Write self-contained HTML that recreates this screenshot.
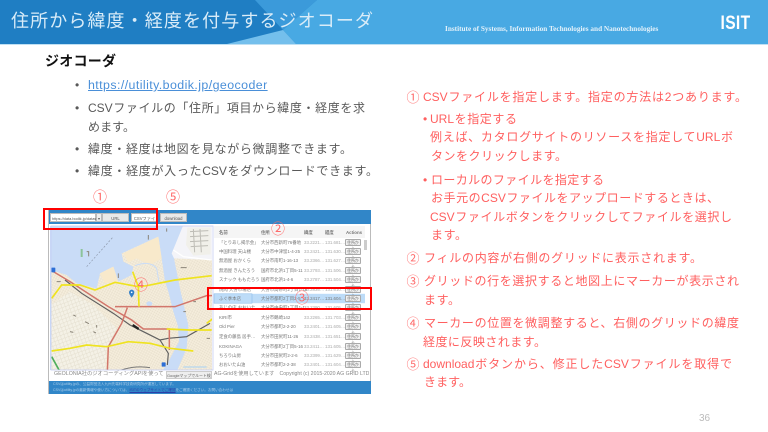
<!DOCTYPE html>
<html lang="ja"><head><meta charset="utf-8"><title>ジオコーダ</title>
<style>
html,body{margin:0;padding:0;background:#fff}
body{width:768px;height:432px;position:relative;overflow:hidden;font-family:"Liberation Sans","Noto Sans CJK JP",sans-serif}
#w{position:absolute;left:0;top:0;width:768px;height:432px;filter:blur(.35px)}
#s{position:absolute;left:0;top:0;width:768px;height:432px;filter:blur(.25px)}
.l{position:absolute;white-space:nowrap;text-align:justify;text-align-last:justify;text-justify:inter-character;line-height:18px;height:18px;font-size:12px}
.r{color:#ff5f5f}
.k{color:#595959}
.n{position:absolute;color:#ff6a6a;font-size:14px;line-height:18px;width:18px;text-align:center;font-family:"Noto Sans CJK JP",sans-serif}
.rb{position:absolute;border:2.5px solid #f00;box-sizing:border-box}
.g{position:absolute;font-size:4.4px;line-height:9px;height:9px;white-space:nowrap;color:#777;overflow:hidden}
.btn{position:absolute;left:345px;width:16px;height:7px;background:#f0f0f0;border:.5px solid #aaa;box-sizing:border-box;border-radius:1px;font-size:3.8px;line-height:6px;text-align:center;color:#666}
.tb{position:absolute;top:213px;height:9px;background:#e9e9e9;font-size:4.2px;line-height:9px;text-align:center;color:#555;border:.5px solid #bbb;box-sizing:border-box}
</style></head><body><div id="w">
<svg style="position:absolute;left:0;top:0" width="768" height="45" viewBox="0 0 768 45">
<rect width="768" height="44" fill="#1f7ec3"/>
<polygon points="255,0 317,0 283,30" fill="#3b9ada"/>
<polygon points="317,0 768,0 768,44 296,44 283,30" fill="#48a9e3"/>
<polygon points="283,30 296,44 227,44" fill="#74bfec"/>
<rect y="44" width="768" height="1" fill="#bfe0f3"/>
</svg>
<div class="l" style="left:11px;top:9px;width:362px;height:24px;line-height:24px;font-size:18px;color:#d9ecf8">住所から緯度・経度を付与するジオコーダ</div>
<div class="l" style="left:445px;top:20px;width:215px;font-family:'Liberation Serif',serif;font-size:7.250px;color:#e3f1fa;text-align-last:left;font-weight:bold">Institute of Systems, Information Technologies and Nanotechnologies</div>
<div style="position:absolute;left:715px;top:12px;width:41px;text-align:center;font-size:19px;line-height:24px;font-weight:bold;color:#fff;letter-spacing:.4px;transform:scaleX(.82)">ISIT</div>

<div class="l" style="left:45px;top:52px;width:71px;font-size:14px;font-weight:bold;color:#111">ジオコーダ</div>
<div class="l k" style="left:75px;top:76px;width:6px;text-align-last:left">•</div>
<div class="l" style="left:88px;top:76px;width:187px;font-size:12.400px;color:#4a8fd8;text-decoration:underline;text-align-last:left;letter-spacing:.42px">https://utility.bodik.jp/geocoder</div>
<div class="l k" style="left:75px;top:99px;width:6px;text-align-last:left">•</div>
<div class="l k" style="left:88px;top:99px;width:277px">CSVファイルの「住所」項目から緯度・経度を求</div>
<div class="l k" style="left:88px;top:118px;width:47px">めます。</div>
<div class="l k" style="left:75px;top:140px;width:6px;text-align-last:left">•</div>
<div class="l k" style="left:88px;top:140px;width:264px">緯度・経度は地図を見ながら微調整できます。</div>
<div class="l k" style="left:75px;top:162px;width:6px;text-align-last:left">•</div>
<div class="l k" style="left:88px;top:162px;width:290px">緯度・経度が入ったCSVをダウンロードできます。</div>

<div id="s">
<div style="position:absolute;left:48px;top:210px;width:323px;height:184px;background:#fff;border:1px solid #bbb;box-sizing:border-box"></div>
<div style="position:absolute;left:49px;top:210px;width:322px;height:14px;background:#3186c8"></div>
<div style="position:absolute;left:49px;top:381px;width:322px;height:13px;background:#3186c8"></div>
<div class="tb" style="left:50px;width:46px;background:#fff;text-align:left;padding-left:1px;font-size:3.900px">https://data.bodik.jp/dataset</div>
<div class="tb" style="left:96px;width:6px;background:#eee">▾</div>
<div class="tb" style="left:102px;width:27px">URL</div>
<div class="tb" style="left:131px;width:27px;background:#fff">CSVファイル</div>
<div class="tb" style="left:160px;width:27px">download</div>
<svg style="position:absolute;left:0;top:0" width="768" height="432" viewBox="0 0 768 432">
<defs>
<pattern id="st" width="7" height="7" patternUnits="userSpaceOnUse" patternTransform="rotate(28)">
<rect width="7" height="7" fill="#f5eddc"/>
<path d="M0,0H7M0,0V7" stroke="#d9d0ba" stroke-width="1.200"/>
</pattern>
<pattern id="st2" width="11" height="11" patternUnits="userSpaceOnUse" patternTransform="rotate(-20)">
<rect width="11" height="11" fill="#f4f1e6"/>
<path d="M0,3q5,3 11,0M3,0q3,5 0,11" stroke="#dfd9c8" stroke-width="1.200" fill="none"/>
</pattern>
<clipPath id="m"><rect x="0" y="3" width="486" height="432"/></clipPath>
</defs>
<g transform="translate(50,225) scale(.33333)" clip-path="url(#m)">
<rect x="0" y="0" width="490" height="440" fill="#c9dcf7"/>
<polygon points="3,135 50,150 80,175 140,190 150,145 190,125 205,170 245,150 250,125 220,110 215,85 325,35 335,100 345,170 355,200 370,260 383,300 387,350 350,420 335,440 3,440" fill="url(#st)"/>
<polygon points="3,240 60,200 130,240 200,310 170,370 165,440 3,440" fill="url(#st2)"/>
<polygon points="220,85 325,35 335,100 300,120 260,100 235,112" fill="#f8e9cb"/>
<polygon points="150,145 190,125 205,170 165,175" fill="#f8e9cb"/>
<polygon points="372,100 392,200 415,300 410,370 380,440 490,440 490,100" fill="url(#st)"/>
<polygon points="365,85 400,0 490,0 490,105 372,100" fill="#f4f4f8"/>
<polygon points="412,8 482,8 482,88 430,92 408,60" fill="#f1f0ea"/>
<path d="M420,20l55,-3M420,35l55,-3M420,50l55,-3M422,65l52,-3M430,12l4,70M450,12l4,70" stroke="#bdbcb5" stroke-width="3" fill="none"/>
<path d="M370,75L400,95L485,105" stroke="#fff" stroke-width="4" fill="none"/>
<path d="M255,122Q300,105 320,130L328,178" stroke="#c9dcf7" stroke-width="3" fill="none"/>
<ellipse cx="298" cy="236" rx="9" ry="7" fill="#c9dcf7"/>
<path d="M110,125L190,35" stroke="#8d98ab" stroke-width="2" stroke-dasharray="6 5" fill="none"/>
<rect x="92" y="72" width="6" height="24" fill="#8bc39a"/>
<path d="M70,270l8,4M105,290l12,6M60,320l10,2M130,320l8,4M20,170h12M205,145v14M295,30v14M392,128h18M400,260h8M430,230h8M470,340h10M110,80h6v14M140,300v8M350,10v10" stroke="#8a8478" stroke-width="3" fill="none"/>
<path d="M45,165L95,205L190,265L240,300L290,325L330,345L355,340L410,335L480,295M330,345L355,385L352,420" stroke="#5f5f5f" stroke-width="3.500" fill="none"/>
<path d="M248,300L266,312" stroke="#222" stroke-width="7"/>
<path d="M200,440Q250,420 300,428" stroke="#777" stroke-width="3" fill="none"/>
<path d="M10,140L60,170L175,245L245,285L280,312H358V375M195,245H375L470,212H490M232,248L215,295L175,365L172,440" stroke="#d2766b" stroke-width="4.500" fill="none"/>
<path d="M5,220L35,180H90L135,195L195,172L265,185L290,182L375,165L485,152M248,140L265,185L267,245M5,378L60,370L110,360L170,365L235,350L300,355L360,370L430,378M350,312L420,315L485,315M470,295L490,280" stroke="#efe31f" stroke-width="5" fill="none"/>
<path d="M5,395L30,440" stroke="#4fae5c" stroke-width="5" fill="none"/>
<rect x="4" y="128" width="12" height="14" rx="2" fill="#2d6fd6"/>
<rect x="335" y="412" width="12" height="13" rx="2" fill="#2d6fd6"/>
<path d="M245,194a8,8 0 0 1 8,8c0,6 -8,16 -8,16s-8,-10 -8,-16a8,8 0 0 1 8,-8z" fill="#3580c8"/>
<circle cx="245" cy="202" r="2.500" fill="#fff"/>
<rect x="400" y="424" width="70" height="4" fill="#b9d7ee"/>
</g>
<rect x="51" y="226" width="162" height="144" fill="none" stroke="#c5cdf3" stroke-width=".8"/>
<rect x="214" y="226" width="151" height="12" fill="#f5f5f5"/>
<rect x="214" y="293.800" width="151" height="9.400" fill="#bddcf8"/>
<rect x="214" y="293.800" width="38" height="9.400" fill="none" stroke="#7fb5e8" stroke-width=".5"/>
<rect x="364" y="240" width="3" height="10" fill="#ccc"/>
</svg>
<div class="g" style="left:219px;top:228px;font-weight:bold">名前</div><div class="g" style="left:261px;top:228px;font-weight:bold">住所</div><div class="g" style="left:304px;top:228px;font-weight:bold">緯度</div><div class="g" style="left:325px;top:228px;font-weight:bold">経度</div><div class="g" style="left:346px;top:228px;font-weight:bold">Actions</div>

<div class="g" style="left:219px;top:237.500px;width:38px">「とりあし掲示会」と…</div><div class="g" style="left:261px;top:237.500px">大分市西新町76番地</div><div class="g" style="left:304px;top:237.500px;color:#aaa">33.2221…</div><div class="g" style="left:325px;top:237.500px;color:#aaa">131.681…</div><div class="btn" style="top:238.500px">住所から</div>
<div class="g" style="left:219px;top:247px">中国料理 天山楼</div><div class="g" style="left:261px;top:247px">大分市中津留1-4-25</div><div class="g" style="left:304px;top:247px;color:#aaa">33.2421…</div><div class="g" style="left:325px;top:247px;color:#aaa">131.630…</div><div class="btn" style="top:248px">住所から</div>
<div class="g" style="left:219px;top:256.300px">無酒屋 おかくら</div><div class="g" style="left:261px;top:256.300px">大分市南町1-16-13</div><div class="g" style="left:304px;top:256.300px;color:#aaa">33.2366…</div><div class="g" style="left:325px;top:256.300px;color:#aaa">131.627…</div><div class="btn" style="top:257.300px">住所から</div>
<div class="g" style="left:219px;top:265.700px">無酒屋 きんたろう</div><div class="g" style="left:261px;top:265.700px">国府市北浜1丁目5-11</div><div class="g" style="left:304px;top:265.700px;color:#aaa">33.2793…</div><div class="g" style="left:325px;top:265.700px;color:#aaa">131.506…</div><div class="btn" style="top:266.700px">住所から</div>
<div class="g" style="left:219px;top:275.100px">スナック ももたろう</div><div class="g" style="left:261px;top:275.100px">国府市北浜1-4-6</div><div class="g" style="left:304px;top:275.100px;color:#aaa">33.2787…</div><div class="g" style="left:325px;top:275.100px;color:#aaa">131.504…</div><div class="btn" style="top:276.100px">住所から</div>
<div class="g" style="left:219px;top:284.500px">焼肉 大分市場店</div><div class="g" style="left:261px;top:284.500px">大分市高砂町2丁目1-18</div><div class="g" style="left:304px;top:284.500px;color:#aaa">33.2835…</div><div class="g" style="left:325px;top:284.500px;color:#aaa">131.610…</div><div class="btn" style="top:285.500px">住所から</div>
<div class="g" style="left:219px;top:294px">ふぐ季本店</div><div class="g" style="left:261px;top:294px">大分市都町2丁目2-5</div><div class="g" style="left:304px;top:294px">33.2417…</div><div class="g" style="left:325px;top:294px">131.604…</div><div class="btn" style="top:295px">住所から</div>
<div class="g" style="left:219px;top:303.300px">あじの店 おおいた</div><div class="g" style="left:261px;top:303.300px">大分市中央町1丁目1-1</div><div class="g" style="left:304px;top:303.300px;color:#aaa">33.2390…</div><div class="g" style="left:325px;top:303.300px;color:#aaa">131.605…</div><div class="btn" style="top:304.300px">住所から</div>
<div class="g" style="left:219px;top:313px">KIRI市</div><div class="g" style="left:261px;top:313px">大分市鶴崎142</div><div class="g" style="left:304px;top:313px;color:#aaa">33.2265…</div><div class="g" style="left:325px;top:313px;color:#aaa">131.703…</div><div class="btn" style="top:314px">住所から</div>
<div class="g" style="left:219px;top:322.300px">Old Pier</div><div class="g" style="left:261px;top:322.300px">大分市都町2-2-20</div><div class="g" style="left:304px;top:322.300px;color:#aaa">33.2401…</div><div class="g" style="left:325px;top:322.300px;color:#aaa">131.605…</div><div class="btn" style="top:323.300px">住所から</div>
<div class="g" style="left:219px;top:331.800px">定食の藤島 居手…</div><div class="g" style="left:261px;top:331.800px">大分市田尻町11-26</div><div class="g" style="left:304px;top:331.800px;color:#aaa">33.2438…</div><div class="g" style="left:325px;top:331.800px;color:#aaa">131.651…</div><div class="btn" style="top:332.800px">住所から</div>
<div class="g" style="left:219px;top:341.500px">KOKINAGA</div><div class="g" style="left:261px;top:341.500px">大分市都町2丁目5-16</div><div class="g" style="left:304px;top:341.500px;color:#aaa">33.2411…</div><div class="g" style="left:325px;top:341.500px;color:#aaa">131.605…</div><div class="btn" style="top:342.500px">住所から</div>
<div class="g" style="left:219px;top:350.700px">ちろり山房</div><div class="g" style="left:261px;top:350.700px">大分市田尻町2-2-6</div><div class="g" style="left:304px;top:350.700px;color:#aaa">33.2399…</div><div class="g" style="left:325px;top:350.700px;color:#aaa">131.629…</div><div class="btn" style="top:351.700px">住所から</div>
<div class="g" style="left:219px;top:360px">おおいた山油</div><div class="g" style="left:261px;top:360px">大分市都町2-2-38</div><div class="g" style="left:304px;top:360px;color:#aaa">33.2401…</div><div class="g" style="left:325px;top:360px;color:#aaa">131.604…</div><div class="btn" style="top:361px">住所から</div>

<div class="g" style="left:54px;top:369px;width:110px;font-size:5.300px;line-height:10px;height:10px;color:#888">GEOLONIA社のジオコーディングAPIを使っています。</div>
<div class="g" style="left:214px;top:369px;width:155px;font-size:5.200px;line-height:10px;height:10px;color:#888">AG-Gridを使用しています　Copyright (c) 2015-2020 AG GRID LTD</div>
<div style="position:absolute;left:166px;top:371px;width:46px;height:8px;background:#eee;border:.5px solid #ccc;box-sizing:border-box;font-size:3.900px;line-height:7px;text-align:center;color:#666;overflow:hidden;white-space:nowrap">Googleマップでルート検索</div>
<div class="g" style="left:53px;top:381px;font-size:3.600px;line-height:6px;color:#a9cdea">CSVはutility.jpの、公益財団法人九州先端科学技術研究所が運営しています。</div>
<div class="g" style="left:53px;top:387px;font-size:3.600px;line-height:6px;color:#a9cdea">CSVはutility.jpの最新情報や使い方については、<span style="color:#2b3fa8;text-decoration:underline">ISITのウェブサイトでご確認</span>をご確認ください。お問い合わせは</div>
</div>

<div class="n" style="left:91px;top:188px">①</div>
<div class="n" style="left:164px;top:188px">⑤</div>
<div class="n" style="left:269px;top:220px">②</div>
<div class="n" style="left:293px;top:289px">③</div>
<div class="n" style="left:132px;top:276px">④</div>
<div class="rb" style="left:43px;top:208px;width:115px;height:22px"></div>
<div class="rb" style="left:207px;top:287px;width:165px;height:23px"></div>

<div class="n" style="left:404px;top:88px;font-size:13px">①</div>
<div class="l r" style="left:423px;top:88px;width:324px">CSVファイルを指定します。指定の方法は2つあります。</div>
<div class="l r" style="left:423px;top:110px;width:6px;text-align-last:left">•</div>
<div class="l r" style="left:430px;top:110px;width:87px">URLを指定する</div>
<div class="l r" style="left:430px;top:128px;width:303px">例えば、カタログサイトのリソースを指定してURLボ</div>
<div class="l r" style="left:431px;top:147px;width:136px">タンをクリックします。</div>
<div class="l r" style="left:423px;top:171px;width:6px;text-align-last:left">•</div>
<div class="l r" style="left:431px;top:171px;width:173px">ローカルのファイルを指定する</div>
<div class="l r" style="left:431px;top:189px;width:288px">お手元のCSVファイルをアップロードするときは、</div>
<div class="l r" style="left:430px;top:208px;width:302px">CSVファイルボタンをクリックしてファイルを選択し</div>
<div class="l r" style="left:431px;top:226px;width:36px">ます。</div>
<div class="n" style="left:404px;top:249px;font-size:13px">②</div>
<div class="l r" style="left:424px;top:249px;width:278px">フィルの内容が右側のグリッドに表示されます。</div>
<div class="n" style="left:404px;top:272px;font-size:13px">③</div>
<div class="l r" style="left:424px;top:272px;width:315px">グリッドの行を選択すると地図上にマーカーが表示され</div>
<div class="l r" style="left:424px;top:291px;width:36px">ます。</div>
<div class="n" style="left:404px;top:314px;font-size:13px">④</div>
<div class="l r" style="left:424px;top:314px;width:315px">マーカーの位置を微調整すると、右側のグリッドの緯度</div>
<div class="l r" style="left:423px;top:333px;width:123px">経度に反映されます。</div>
<div class="n" style="left:404px;top:355px;font-size:13px">⑤</div>
<div class="l r" style="left:423px;top:355px;width:309px">downloadボタンから、修正したCSVファイルを取得で</div>
<div class="l r" style="left:424px;top:373px;width:47px">きます。</div>
<div class="l" style="left:699px;top:410px;width:12px;font-size:10px;color:#bbb;text-align-last:left">36</div>
</div></body></html>
